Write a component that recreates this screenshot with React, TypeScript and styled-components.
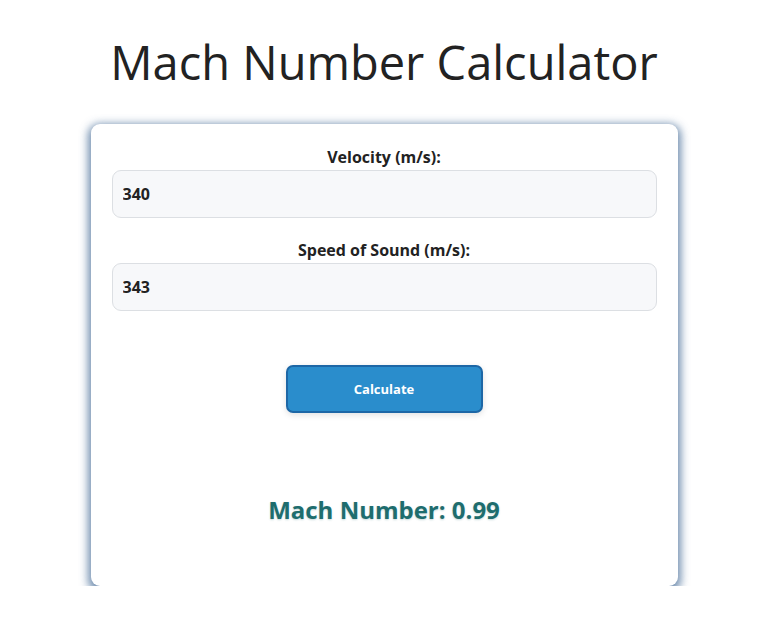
import React, { useState } from "react";
import styled, { createGlobalStyle } from "styled-components";

const Global = createGlobalStyle`
  html, body {
    margin: 0;
    padding: 0;
    background: #ffffff;
    font-family: "Open Sans", "Noto Sans", "DejaVu Sans", sans-serif;
    color: #222;
  }
`;

const Page = styled.div`
  display: flex;
  flex-direction: column;
  align-items: center;
  padding-top: 24px;
`;

const Title = styled.h1`
  margin: 0 0 24px;
  font-size: 47px;
  font-weight: 400;
  line-height: 76px;
  color: #222;
`;

const Card = styled.div`
  box-sizing: border-box;
  width: 587px;
  height: 462px;
  background: #fff;
  border-radius: 9px;
  box-shadow: 0 3px 9px 3px rgba(60, 100, 145, 0.72);
  padding: 21px 21px 20px;
  display: flex;
  flex-direction: column;
`;

const Field = styled.div`
  display: flex;
  flex-direction: column;
  align-items: stretch;
  margin-bottom: 20px;
`;

const Label = styled.label`
  text-align: center;
  font-size: 16px;
  font-weight: 700;
  line-height: 24px;
  margin-bottom: 1px;
  color: #222;
`;

const Input = styled.input`
  box-sizing: border-box;
  height: 48px;
  width: 100%;
  border: 1px solid #dcdfe3;
  border-radius: 9px;
  background: #f7f8fa;
  padding: 0 10px;
  font-family: inherit;
  font-size: 16px;
  font-weight: 700;
  color: #222;
  outline: none;
`;

const Button = styled.button`
  align-self: center;
  margin-top: 34px;
  width: 197px;
  height: 48px;
  border: 2px solid #1d67a6;
  border-radius: 7px;
  background: #2a8dcc;
  color: #fff;
  font-family: inherit;
  font-size: 13px;
  font-weight: 700;
  box-shadow: 0 2px 6px rgba(0, 0, 0, 0.12);
  cursor: pointer;
`;

const Result = styled.div`
  margin-top: 80px;
  text-align: center;
  font-size: 24px;
  font-weight: 700;
  color: #1e6d6e;
  text-shadow: 0 1px 2px rgba(30, 109, 110, 0.25);
`;

export default function App() {
  const [velocity, setVelocity] = useState("340");
  const [sound, setSound] = useState("343");
  const [mach, setMach] = useState(340 / 343);

  const calculate = () => {
    const v = parseFloat(velocity);
    const a = parseFloat(sound);
    if (!isNaN(v) && !isNaN(a) && a !== 0) setMach(v / a);
  };

  return (
    <>
      <Global />
      <Page>
        <Title>Mach Number Calculator</Title>
        <Card>
          <Field>
            <Label htmlFor="velocity">Velocity (m/s):</Label>
            <Input id="velocity" value={velocity} onChange={(e) => setVelocity(e.target.value)} />
          </Field>
          <Field>
            <Label htmlFor="sound">Speed of Sound (m/s):</Label>
            <Input id="sound" value={sound} onChange={(e) => setSound(e.target.value)} />
          </Field>
          <Button onClick={calculate}>Calculate</Button>
          <Result>Mach Number: {mach.toFixed(2)}</Result>
        </Card>
      </Page>
    </>
  );
}
